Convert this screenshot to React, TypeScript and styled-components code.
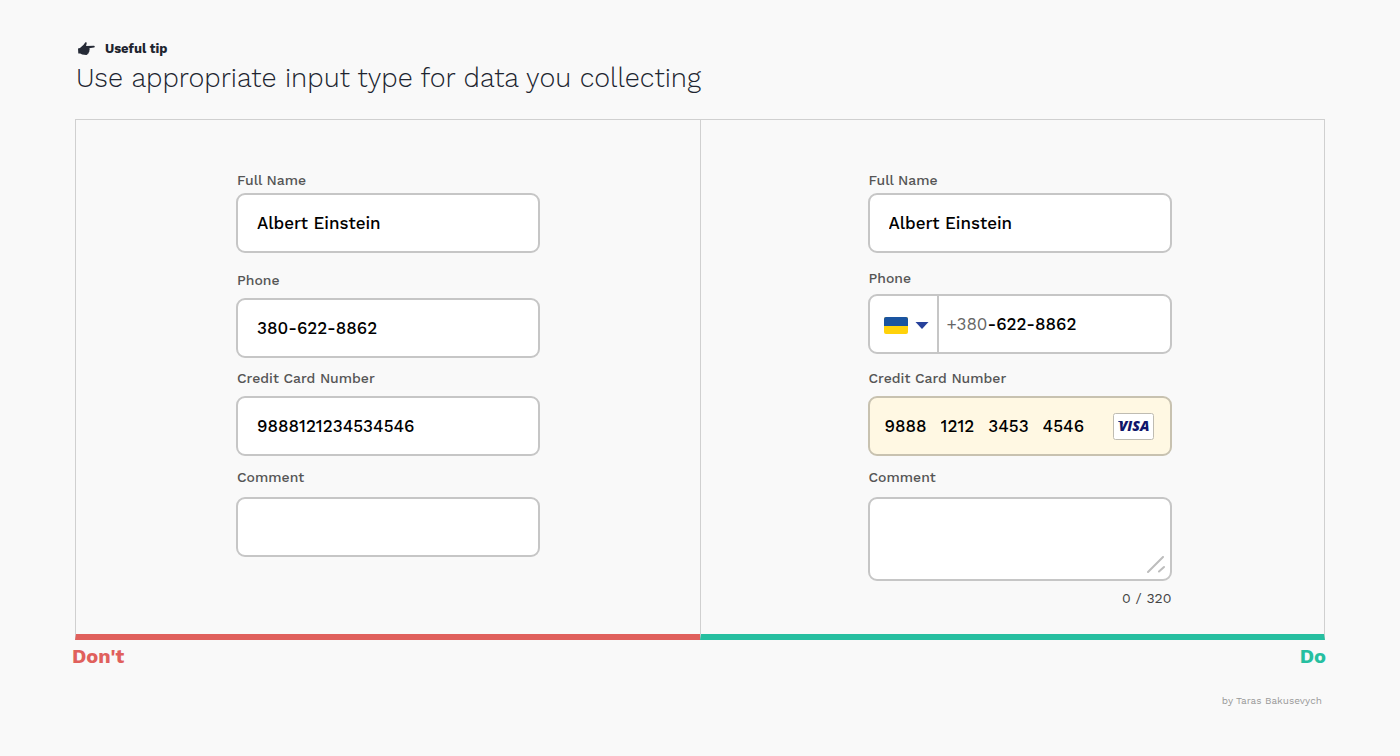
import React, { useState } from "react";
import styled, { createGlobalStyle } from "styled-components";

const GlobalStyle = createGlobalStyle`
  *, *::before, *::after { box-sizing: border-box; }
  body {
    margin: 0;
    background: #f9f9f9;
    color: #20242f;
    font-family: "Work Sans", Inter, "Liberation Sans", sans-serif;
  }
  input, textarea, select { font: inherit; color: inherit; }
`;

const Page = styled.main`
  padding: 38px 75px 0;
`;

const Tip = styled.p`
  display: flex;
  align-items: center;
  gap: 9px;
  margin: 0;
  padding-left: 2px;
  font-size: 13px;
  line-height: 21px;
  font-weight: 700;
`;

const Title = styled.h1`
  margin: 0 0 22px;
  padding-left: 1px;
  font-size: 27px;
  line-height: 38px;
  font-weight: 300;
`;

const Comparison = styled.div`
  display: grid;
  grid-template-columns: 1fr 1fr;
`;

const Column = styled.section<{ $tone: string }>`
  display: flex;
  flex-direction: column;
  color: ${(p) => p.$tone};
`;

const Panel = styled.div<{ $last?: boolean }>`
  flex: 1;
  display: flex;
  justify-content: center;
  padding: 50px 0 26px ${(p) => (p.$last ? 14 : 0)}px;
  border: 1px solid #d0d0d0;
  border-right-width: ${(p) => (p.$last ? 1 : 0)}px;
  border-bottom: 6px solid currentColor;
`;

const Verdict = styled.h2<{ $end?: boolean }>`
  margin: 3px ${(p) => (p.$end ? -1 : 0)}px 0 ${(p) => (p.$end ? 0 : -3)}px;
  font-size: 20px;
  line-height: 26px;
  font-weight: 700;
  text-align: ${(p) => (p.$end ? "right" : "left")};
`;

const Form = styled.form`
  width: 304px;
  color: #000;
`;

const Field = styled.div<{ $before?: number; $gap?: number }>`
  display: flex;
  flex-direction: column;
  gap: ${(p) => p.$gap ?? 8}px;
  margin-top: ${(p) => p.$before ?? 0}px;
`;

const Label = styled.label`
  padding-left: 1px;
  color: #555;
  font-size: 14px;
  line-height: 20px;
  font-weight: 500;
`;

const frame = `
  border: 2px solid #c6c6c6;
  border-radius: 9px;
  background: #fff;
`;

const TextInput = styled.input`
  ${frame}
  width: 100%;
  height: 60px;
  padding: 0 19px;
  font-size: 17px;
  font-weight: 500;
`;

const Group = styled.div<{ $filled?: boolean }>`
  ${frame}
  display: flex;
  align-items: center;
  height: 60px;
  font-size: 17px;
  font-weight: 500;
  ${(p) => p.$filled && "background: #fff8e3; border-color: #c8c2b0; padding: 0 16px 0 15px; gap: 14px;"}
`;

const Country = styled.div`
  display: grid;
  align-items: center;
  align-self: stretch;
  width: 69px;
  border-right: 2px solid #c6c6c6;
  > * { grid-area: 1 / 1; }
`;

const CountryFace = styled.span`
  display: flex;
  align-items: center;
  gap: 7px;
  padding: 2px 0 0 14px;
`;

const CountrySelect = styled.select`
  width: 100%;
  height: 100%;
  opacity: 0;
`;

const Prefix = styled.span`
  padding-left: 8px;
  color: #666;
  font-weight: 400;
`;

const BareInput = styled.input`
  flex: 1;
  min-width: 0;
  padding: 0;
  border: 0;
  background: none;
`;

const DigitsInput = styled.input`
  field-sizing: content;
  padding: 0;
  border: 0;
  background: none;
`;

const Brand = styled.svg`
  margin-left: auto;
`;

const AreaWrap = styled.div`
  display: grid;
  > * { grid-area: 1 / 1; }
`;

const TextArea = styled.textarea`
  ${frame}
  height: 84px;
  padding: 16px 19px;
  font-size: 17px;
  resize: none;
`;

const Grip = styled.svg`
  place-self: end;
  margin: 0 7px 7px 0;
  pointer-events: none;
`;

const Counter = styled.output`
  display: block;
  margin-top: 7px;
  color: #444;
  font-size: 14px;
  line-height: 20px;
  text-align: right;
`;

const Credit = styled.footer`
  margin-top: 22px;
  padding: 0 3px 20px 0;
  color: #999;
  font-size: 10px;
  line-height: 20px;
  text-align: right;
`;

const PointIcon = () => (
  <svg width="19" height="14" viewBox="0 0 19 14" fill="#252a36" aria-hidden="true">
    <path d="M1 6.4 3 6 6.6 2.7 8.2.6C8.7 0 9.8.4 9.7 1.3L9.1 4.1 16.9 3.8C18 3.8 18.1 5.4 17 5.6L12.2 6.3C13 6.9 12.9 7.8 12.2 8.1 12.8 8.9 12.5 9.8 11.7 10 12.1 10.9 11.6 11.7 10.7 11.8 10.7 12.5 10 13 9.2 12.9L5.2 12.5 3.2 11.4 1.3 11.6Z" />
  </svg>
);

const cardGroups = ["9888", "1212", "3453", "4546"];

export default function App() {
  const [comment, setComment] = useState("");
  return (
    <>
      <GlobalStyle />
      <Page>
        <Tip>
          <PointIcon />
          Useful tip
        </Tip>
        <Title>Use appropriate input type for data you collecting</Title>
        <Comparison>
          <Column $tone="#e0605c">
            <Panel>
              <Form>
                <Field $gap={3}>
                  <Label htmlFor="a-name">Full Name</Label>
                  <TextInput id="a-name" defaultValue="Albert Einstein" />
                </Field>
                <Field $before={17}>
                  <Label htmlFor="a-phone">Phone</Label>
                  <TextInput id="a-phone" defaultValue="380-622-8862" />
                </Field>
                <Field $before={10}>
                  <Label htmlFor="a-card">Credit Card Number</Label>
                  <TextInput id="a-card" defaultValue="9888121234534546" />
                </Field>
                <Field $before={11} $gap={10}>
                  <Label htmlFor="a-comment">Comment</Label>
                  <TextInput id="a-comment" />
                </Field>
              </Form>
            </Panel>
            <Verdict>Don't</Verdict>
          </Column>
          <Column $tone="#26bfa0">
            <Panel $last>
              <Form>
                <Field $gap={3}>
                  <Label htmlFor="b-name">Full Name</Label>
                  <TextInput id="b-name" autoComplete="name" defaultValue="Albert Einstein" />
                </Field>
                <Field $before={15} $gap={6}>
                  <Label htmlFor="b-phone">Phone</Label>
                  <Group>
                    <Country>
                      <CountryFace aria-hidden="true">
                        <svg width="24" height="17" viewBox="0 0 24 17">
                          <rect width="24" height="17" rx="2" fill="#ffd20a" />
                          <path d="M0 9V2a2 2 0 0 1 2-2h20a2 2 0 0 1 2 2v7Z" fill="#1a54a0" />
                        </svg>
                        <svg width="14" height="7" viewBox="0 0 14 7">
                          <path d="M.5 0h13L7 7Z" fill="#27419b" />
                        </svg>
                      </CountryFace>
                      <CountrySelect aria-label="Country" defaultValue="UA">
                        <option value="UA">Ukraine</option>
                      </CountrySelect>
                    </Country>
                    <Prefix>+380</Prefix>
                    <BareInput id="b-phone" type="tel" defaultValue="-622-8862" />
                  </Group>
                </Field>
                <Field $before={14}>
                  <Label htmlFor="b-card-0">Credit Card Number</Label>
                  <Group $filled>
                    {cardGroups.map((digits, i) => (
                      <DigitsInput
                        key={digits}
                        id={`b-card-${i}`}
                        aria-label={`Card digits, group ${i + 1}`}
                        inputMode="numeric"
                        maxLength={4}
                        defaultValue={digits}
                      />
                    ))}
                    <Brand width="41" height="27" viewBox="0 0 41 27" role="img" aria-label="Visa">
                      <rect x=".5" y=".5" width="40" height="26" rx="2" fill="#fff" stroke="#bfbcb2" />
                      <text x="21" y="18" textAnchor="middle" fontFamily="Open Sans" fontSize="14" fontWeight="800" fontStyle="italic" fill="#10156b">
                        VISA
                      </text>
                      <path d="M5 8h4l1.500 4C9 10 7.500 9 5 8.400Z" fill="#10156b" />
                    </Brand>
                  </Group>
                </Field>
                <Field $before={11} $gap={10}>
                  <Label htmlFor="b-comment">Comment</Label>
                  <AreaWrap>
                    <TextArea
                      id="b-comment"
                      maxLength={320}
                      value={comment}
                      onChange={(e) => setComment(e.target.value)}
                    />
                    <Grip width="18" height="18" viewBox="0 0 18 18" stroke="#bdbdbd" strokeWidth="2" strokeLinecap="round" aria-hidden="true">
                      <path d="M1 16 16 1M12 15.5 17 11" />
                    </Grip>
                  </AreaWrap>
                </Field>
                <Counter htmlFor="b-comment">{comment.length} / 320</Counter>
              </Form>
            </Panel>
            <Verdict $end>Do</Verdict>
          </Column>
        </Comparison>
        <Credit>by Taras Bakusevych</Credit>
      </Page>
    </>
  );
}
